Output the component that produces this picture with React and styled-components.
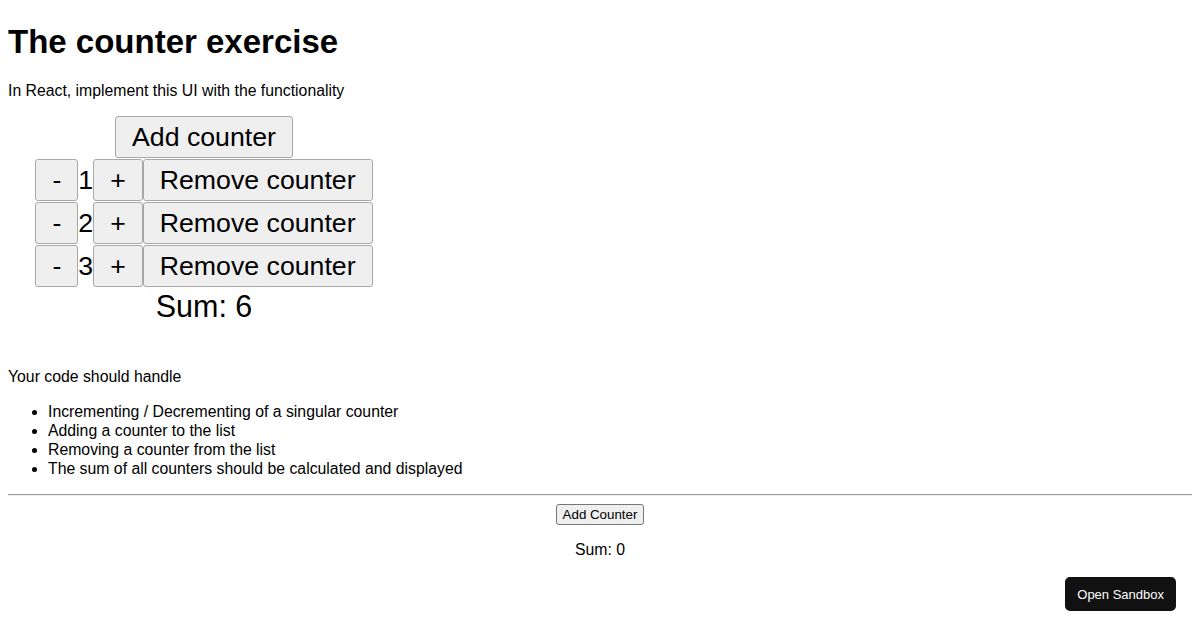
import React, { useState } from "react"
import styled, { createGlobalStyle } from "styled-components"

const GlobalStyle = createGlobalStyle`
body {
  margin: 8px;
  background: #ffffff;
  color: #000000;
  font-family: "Liberation Sans", Arial, sans-serif;
}
`

export default function App() {
    const [counters, setCounters] = useState([])
    const demo = [1, 2, 3]
    const sum = counters.reduce((a, b) => a + b, 0)

    return (
        <Page>
            <GlobalStyle />
            <Title>The counter exercise</Title>
            <Text>In React, implement this UI with the functionality</Text>
            <Demo>
                <DemoButton>Add counter</DemoButton>
                {demo.map((value) => (
                    <DemoRow key={value}>
                        <DemoButton>-</DemoButton>
                        <DemoValue>{value}</DemoValue>
                        <DemoButton>+</DemoButton>
                        <DemoButton>Remove counter</DemoButton>
                    </DemoRow>
                ))}
                <DemoSum>Sum: 6</DemoSum>
            </Demo>
            <Text>Your code should handle</Text>
            <List>
                <li>Incrementing / Decrementing of a singular counter</li>
                <li>Adding a counter to the list</li>
                <li>Removing a counter from the list</li>
                <li>The sum of all counters should be calculated and displayed</li>
            </List>
            <Divider />
            <Solution>
                <SmallButton onClick={() => setCounters([...counters, 0])}>Add Counter</SmallButton>
                {counters.map((value, i) => (
                    <div key={i}>
                        <SmallButton onClick={() => setCounters(counters.map((v, j) => (j === i ? v - 1 : v)))}>-</SmallButton>
                        {" "}{value}{" "}
                        <SmallButton onClick={() => setCounters(counters.map((v, j) => (j === i ? v + 1 : v)))}>+</SmallButton>
                        <SmallButton onClick={() => setCounters(counters.filter((_, j) => j !== i))}>Remove counter</SmallButton>
                    </div>
                ))}
                <Text>Sum: {sum}</Text>
            </Solution>
            <SandboxButton>Open Sandbox</SandboxButton>
        </Page>
    )
}

const Page = styled.div`
font-family: "Liberation Sans", Arial, sans-serif;
`
const Title = styled.h1`
font-size: 33px;
font-weight: bold;
margin: 15px 0 21.44px;
`
const Text = styled.p`
font-size: 15.8px;
margin: 16px 0;
`
const Demo = styled.div`
display: flex;
flex-direction: column;
align-items: center;
width: 338px;
margin-left: 27px;
padding-bottom: 27px;
gap: 1px;
`
const DemoRow = styled.div`
display: flex;
flex-direction: row;
align-items: center;
`
const DemoButton = styled.button`
height: 42px;
padding: 0 16px;
white-space: nowrap;
font-family: "Liberation Sans", Arial, sans-serif;
font-size: 26.7px;
color: #000000;
background-color: #efefef;
border: 1px solid #a8a8a8;
border-radius: 3px;
`
const DemoValue = styled.span`
font-size: 26.7px;
line-height: 42px;
`
const DemoSum = styled.div`
font-size: 30.5px;
line-height: 37px;
`
const List = styled.ul`
margin: 16px 0;
padding-left: 40px;
font-size: 15.8px;
li {
  line-height: 19px;
}
`
const Divider = styled.hr`
margin: 8px 0;
border: none;
border-top: 1px solid #9a9a9a;
border-bottom: 1px solid #eeeeee;
`
const Solution = styled.div`
text-align: center;
`
const SmallButton = styled.button`
height: 21px;
font-family: "Liberation Sans", Arial, sans-serif;
font-size: 13.33px;
padding: 1px 6px;
color: #000000;
background-color: #efefef;
border: 1px solid #767676;
border-radius: 3px;
vertical-align: top;
`
const SandboxButton = styled.button`
position: fixed;
right: 24px;
bottom: 19px;
height: 34px;
padding: 0 12px;
font-family: "Liberation Sans", Arial, sans-serif;
font-size: 13px;
color: #ffffff;
background-color: #111111;
border: none;
border-radius: 5px;
`
